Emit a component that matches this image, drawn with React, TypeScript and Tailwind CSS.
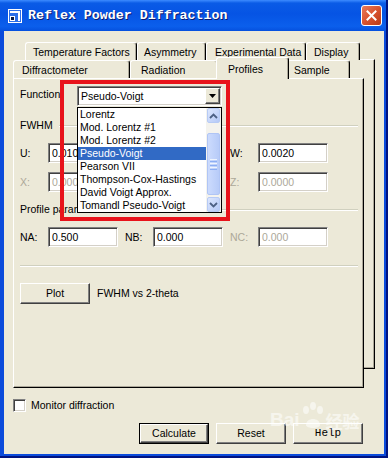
import React from 'react';

const ITEMS = [
  'Lorentz',
  'Mod. Lorentz #1',
  'Mod. Lorentz #2',
  'Pseudo-Voigt',
  'Pearson VII',
  'Thompson-Cox-Hastings',
  'David Voigt Approx.',
  'Tomandl Pseudo-Voigt',
];

function Tab({ label, w, pl, selected = false }: { label: string; w: string; pl: string; selected?: boolean }) {
  if (selected) {
    return (
      <div
        className={`relative z-10 -mx-[2px] -mb-px h-[22px] ${w} ${pl} pt-[1px] flex items-center bg-[#ECE9D8] border-t border-l border-r border-t-white border-l-white border-r-black rounded-t-[3px] shadow-[inset_-1px_0_0_#ACA899]`}
      >
        {label}
      </div>
    );
  }
  return (
    <div
      className={`h-full ${w} ${pl} pt-[2px] flex items-center bg-[#ECE9D8] border-t border-l border-r border-t-white border-l-white border-r-black rounded-t-[3px] shadow-[inset_-1px_0_0_#ACA899]`}
    >
      {label}
    </div>
  );
}

function Field({ value, disabled = false }: { value: string; disabled?: boolean }) {
  return (
    <div
      className={`w-[70px] h-[20px] pl-[3px] flex items-center bg-white border border-t-[#808080] border-l-[#808080] border-b-white border-r-white shadow-[inset_1px_1px_0_#404040,inset_-1px_-1px_0_#D4D0C8] ${disabled ? 'text-[#ACA899]' : 'text-black'}`}
    >
      {value}
    </div>
  );
}

function Cell({ label, value, disabled = false }: { label: string; value: string; disabled?: boolean }) {
  return (
    <div className="flex items-center">
      <span className={`w-[28px] ${disabled ? 'text-[#ACA899]' : ''}`}>{label}</span>
      <Field value={value} disabled={disabled} />
    </div>
  );
}

// column that sits fully under the open drop-down list
function HiddenCell() {
  return <div className="w-[98px]" />;
}

function GroupHeader({ label }: { label: string }) {
  return (
    <div className="flex items-center h-[13px] mr-[5px]">
      <span>{label}</span>
      <div className="flex-1 ml-[6px] border-t border-b border-t-[#D0D0BF] border-b-white" />
    </div>
  );
}

function Button({ label, def = false, mono = false }: { label: string; def?: boolean; mono?: boolean }) {
  const inner = (
    <div
      className={`w-full h-full flex items-center justify-center bg-[#ECE9D8] border border-t-white border-l-white border-b-[#404040] border-r-[#404040] shadow-[inset_-1px_-1px_0_#808080] ${mono ? "font-['Liberation_Mono',monospace] text-[11px]" : ''}`}
    >
      {label}
    </div>
  );
  if (def) return <div className="w-[70px] h-[21px] border border-black">{inner}</div>;
  return <div className="w-[70px] h-[21px]">{inner}</div>;
}

function ScrollBtn({ up }: { up?: boolean }) {
  return (
    <div className="h-[15px] mx-px flex items-center justify-center rounded-[2px] border border-[#B7CBF5] bg-linear-to-br from-[#DDE7FE] to-[#B5C9F7]">
      <svg width="9" height="6" viewBox="0 0 9 6">
        <path
          d={up ? 'M1 5 L4.5 1.5 L8 5' : 'M1 1 L4.5 4.5 L8 1'}
          fill="none"
          stroke="#4D6185"
          strokeWidth="1.8"
        />
      </svg>
    </div>
  );
}

function DropList() {
  return (
    <div className="absolute z-20 left-[63px] top-[28px] w-[145px] h-[106px] bg-white border border-black flex">
      <div className="flex-1 flex flex-col">
        {ITEMS.map((t) => (
          <div
            key={t}
            className={`h-[13px] pl-[2px] flex items-center whitespace-nowrap ${t === 'Pseudo-Voigt' ? 'bg-[#316AC5] text-white' : ''}`}
          >
            {t}
          </div>
        ))}
      </div>
      <div className="w-[15px] flex flex-col bg-[#F4F3EE]">
        <ScrollBtn up />
        <div className="h-[10px]" />
        <div className="h-[62px] mx-px rounded-[2px] border border-[#B0C5F5] bg-linear-to-r from-[#CCDBFD] to-[#B7CBF8] flex flex-col items-center justify-center gap-[1px]">
          <div className="w-[7px] h-px bg-[#EEF4FE]" />
          <div className="w-[7px] h-px bg-[#8CAEF3]" />
          <div className="w-[7px] h-px bg-[#EEF4FE]" />
          <div className="w-[7px] h-px bg-[#8CAEF3]" />
          <div className="w-[7px] h-px bg-[#EEF4FE]" />
          <div className="w-[7px] h-px bg-[#8CAEF3]" />
        </div>
        <div className="flex-1" />
        <ScrollBtn />
      </div>
    </div>
  );
}

export default function App() {
  return (
    <div className="w-[388px] h-[458px] flex flex-col bg-[#0B4BDB] border-r-2 border-b-2 border-r-[#00137F] border-b-[#00137F] font-['Liberation_Sans',Arial,sans-serif] text-[10.5px] text-black leading-none select-none">
      {/* title bar */}
      <div className="h-[31px] shrink-0 flex items-center pl-[8px] bg-[linear-gradient(to_bottom,#3D8BFF_0%,#0A5BE6_10%,#0654E4_45%,#0B5FEC_85%,#0550DE_100%)]">
        <svg width="14" height="14" viewBox="0 0 14 14" className="shrink-0">
          <rect x="0.5" y="0.5" width="13" height="13" fill="#2C6FE8" stroke="#fff" />
          <rect x="2" y="2" width="10" height="2" fill="#fff" />
          <rect x="10" y="4" width="2" height="8" fill="#fff" />
          <rect x="2" y="7" width="5" height="5" fill="#fff" />
          <rect x="3" y="8" width="3" height="3" fill="#0A1A40" />
        </svg>
        <span className="ml-[6px] text-white font-bold text-[13.3px] font-['Liberation_Mono',monospace] [text-shadow:1px_1px_0_#0A1C6E]">
          Reflex Powder Diffraction
        </span>
        <div className="ml-auto mr-[4px] w-[21px] h-[21px] rounded-[3px] border border-white bg-linear-to-br from-[#E87A5B] via-[#D9532F] to-[#B93A16] flex items-center justify-center">
          <svg width="11" height="11" viewBox="0 0 11 11">
            <path d="M1.5 1.5 L9.5 9.5 M9.5 1.5 L1.5 9.5" stroke="#fff" strokeWidth="2" strokeLinecap="square" />
          </svg>
        </div>
      </div>

      {/* body */}
      <div className="relative flex-1 ml-[4px] mr-[2px] mb-[2px] bg-[#ECE9D8] flex flex-col">
        {/* back page of the stacked tab rows */}
        <div className="absolute left-[21px] top-[28px] w-[350px] h-[310px] border-t border-r border-b border-t-white border-r-black border-b-black shadow-[inset_-1px_-1px_0_#ACA899]" />

        {/* back row of tabs */}
        <div className="relative mt-[11px] ml-[21px] h-[18px] flex">
          <Tab label="Temperature Factors" w="w-[112px]" pl="pl-[7px]" />
          <Tab label="Asymmetry" w="w-[69px]" pl="pl-[6px]" />
          <Tab label="Experimental Data" w="w-[100px]" pl="pl-[8px]" />
          <Tab label="Display" w="w-[54px]" pl="pl-[7px]" />
        </div>

        {/* front row of tabs */}
        <div className="relative ml-[9px] h-[18px] flex items-end">
          <Tab label="Diffractometer" w="w-[117px]" pl="pl-[8px]" />
          <Tab label="Radiation" w="w-[88px]" pl="pl-[10px]" />
          <Tab label="Profiles" w="w-[73px]" pl="pl-[11px]" selected />
          <Tab label="Sample" w="w-[63px]" pl="pl-[6px]" />
        </div>

        {/* tab page */}
        <div className="relative ml-[9px] w-[351px] h-[310px] bg-[#ECE9D8] border border-t-white border-l-white border-r-black border-b-black shadow-[inset_-1px_-1px_0_#ACA899] pl-[6px] pt-[7px] flex flex-col">
          <div className="flex h-[20px]">
            <span className="w-[57px] pt-[3px]">Function</span>
            <div className="w-[145px] h-[20px] flex items-center bg-white border border-t-[#808080] border-l-[#808080] border-b-white border-r-white shadow-[inset_1px_1px_0_#404040,inset_-1px_-1px_0_#D4D0C8]">
              <span className="flex-1 pl-[3px]">Pseudo-Voigt</span>
              <div className="w-[15px] h-[16px] mr-[1px] flex items-center justify-center bg-[#ECE9D8] border border-t-white border-l-white border-b-[#404040] border-r-[#404040] shadow-[inset_-1px_-1px_0_#808080]">
                <svg width="7" height="4" viewBox="0 0 7 4">
                  <path d="M0 0 H7 L3.5 4 Z" fill="#000" />
                </svg>
              </div>
            </div>
          </div>

          <div className="mt-[13px]">
            <GroupHeader label="FWHM" />
          </div>
          <div className="mt-[11px] h-[20px] flex gap-[7px]">
            <Cell label="U:" value="0.0100" />
            <HiddenCell />
            <Cell label="W:" value="0.0020" />
          </div>
          <div className="mt-[9px] h-[20px] flex gap-[7px]">
            <Cell label="X:" value="0.0000" disabled />
            <HiddenCell />
            <Cell label="Z:" value="0.0000" disabled />
          </div>

          <div className="mt-[11px]">
            <GroupHeader label="Profile parameters" />
          </div>
          <div className="mt-[11px] h-[20px] flex gap-[7px]">
            <Cell label="NA:" value="0.500" />
            <Cell label="NB:" value="0.000" />
            <Cell label="NC:" value="0.000" disabled />
          </div>

          <div className="mt-[18px] mr-[5px] border-t border-b border-t-[#D0D0BF] border-b-white" />

          <div className="mt-[16px] flex items-center">
            <Button label="Plot" />
            <span className="ml-[7px]">FWHM vs 2-theta</span>
          </div>

          <DropList />

          {/* red annotation frame */}
          <div className="absolute z-30 left-[46px] top-[1px] w-[170px] h-[141px] border-[4px] border-[#E8131B] pointer-events-none" />
        </div>

        {/* checkbox */}
        <div className="mt-[11px] ml-[9px] h-[13px] flex items-center">
          <div className="w-[13px] h-[13px] bg-white border border-t-[#808080] border-l-[#808080] border-b-white border-r-white shadow-[inset_1px_1px_0_#404040,inset_-1px_-1px_0_#D4D0C8]" />
          <span className="ml-[5px]">Monitor diffraction</span>
        </div>

        {/* dialog buttons */}
        <div className="mt-[11px] ml-[135px] flex gap-[7px]">
          <Button label="Calculate" def />
          <Button label="Reset" />
          <Button label="Help" mono />
        </div>

        {/* watermark */}
        <div className="absolute z-40 left-[266px] top-[370px] flex items-end text-white/55 font-bold pointer-events-none">
          <span className="text-[19px] leading-none">Bai</span>
          <svg width="26" height="30" viewBox="0 0 26 30" className="opacity-55 -mb-[2px]">
            <ellipse cx="6" cy="9" rx="3" ry="4" fill="#fff" />
            <ellipse cx="13" cy="5" rx="3" ry="4" fill="#fff" />
            <ellipse cx="20" cy="9" rx="3" ry="4" fill="#fff" />
            <path d="M6 24 C6 16 20 16 20 24 C20 28 6 28 6 24 Z" fill="#fff" />
          </svg>
          <span className="text-[17px] leading-none font-['Noto_Sans_CJK_SC',sans-serif]">经验</span>
        </div>
      </div>
    </div>
  );
}
